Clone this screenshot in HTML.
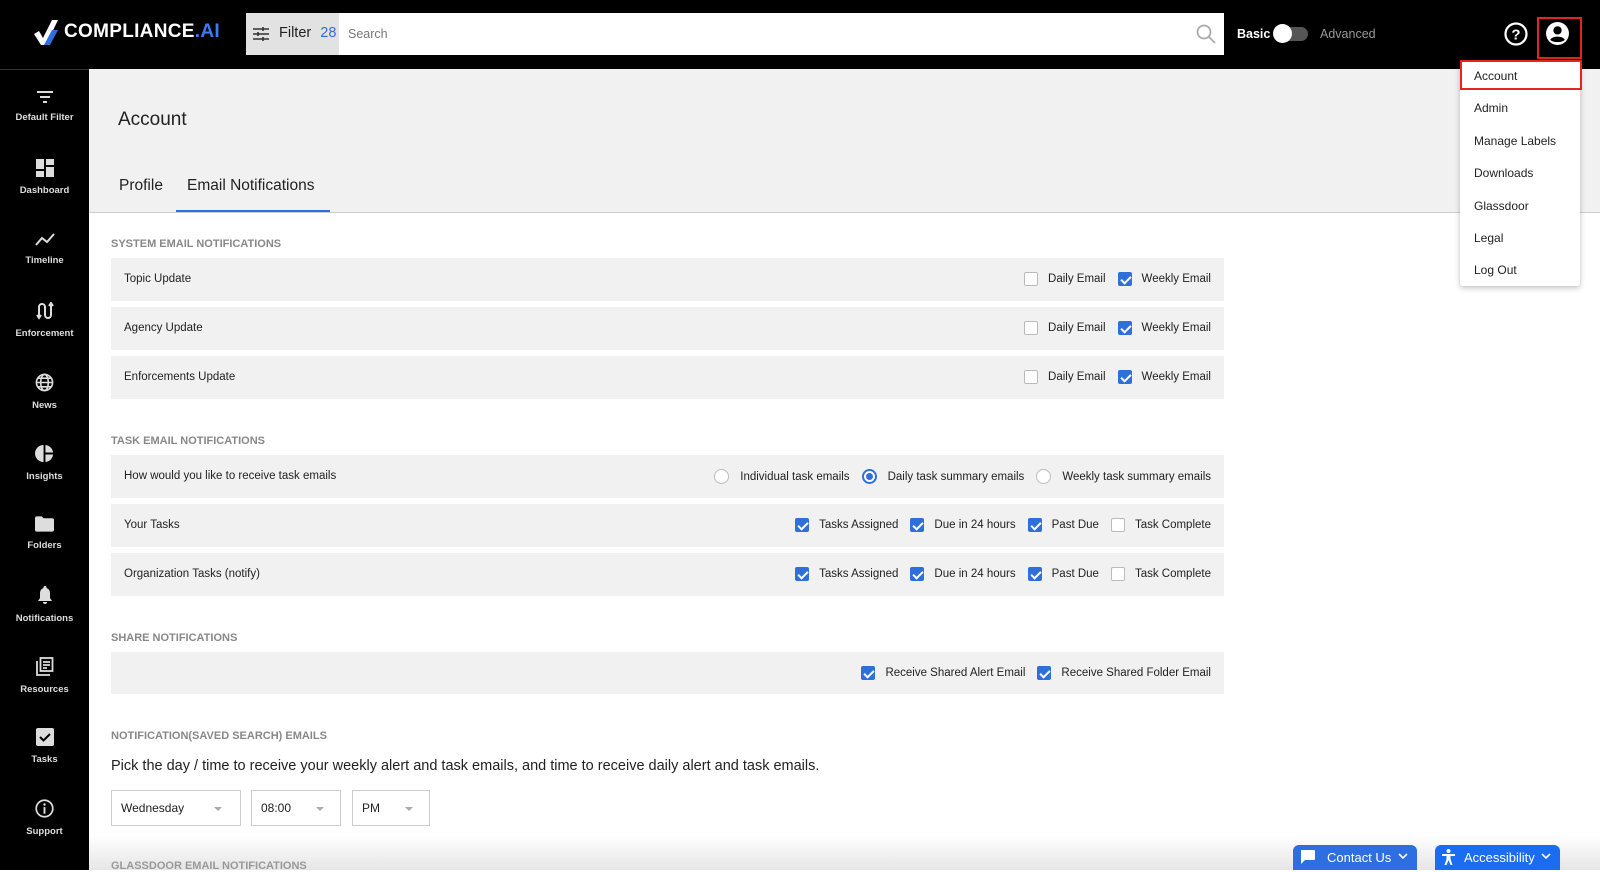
<!DOCTYPE html>
<html><head><meta charset="utf-8"><style>
*{box-sizing:border-box;margin:0;padding:0}
body{width:1600px;height:870px;overflow:hidden;font-family:"Liberation Sans",sans-serif;background:#fff;position:relative;color:#222}
.abs{position:absolute}
.nav{left:0;top:0;width:1600px;height:69px;background:#000}
.side{left:0;top:69px;width:89px;height:801px;background:#000;border-top:1px solid #333}
.si{position:absolute;left:0;width:89px;text-align:center;color:#ddd;font-size:9.5px;font-weight:bold}
.si svg{display:block;margin:0 auto 8px}
.hdr{left:89px;top:69px;width:1511px;height:144px;background:#f1f1f1;border-bottom:1px solid #ccc}
.h{position:absolute;left:111px;font-size:11px;color:#888;font-weight:bold}
.row{position:absolute;left:111px;width:1113px;height:43px;background:#f1f1f1;font-size:11.5px;color:#222}
.row .l{position:absolute;left:13px;top:15px}
.opts{position:absolute;right:13px;top:14px;display:flex;align-items:center;gap:0}
.cb{width:14px;height:14px;border:1px solid #bbb;background:#fff;border-radius:2px;margin-right:10px;margin-left:12px;display:inline-block;position:relative}
.cb.on{background:#2f6fdc;border-color:#2f6fdc}
.cb.on:after{content:"";position:absolute;left:4px;top:1px;width:4px;height:8px;border:solid #fff;border-width:0 2px 2px 0;transform:rotate(45deg)}
.rd{width:15px;height:15px;border:1px solid #bbb;border-radius:50%;background:#fff;display:inline-block;margin-right:11px;margin-left:12px;position:relative}
.rd.on{border-color:#2f6fdc;border-width:2px}
.rd.on:after{content:"";position:absolute;left:2px;top:2px;width:7px;height:7px;border-radius:50%;background:#2f6fdc}
.sel{position:absolute;top:790px;height:36px;border:1px solid #ccc;font-size:12px;padding:10px 9px}
.sel i{position:absolute;top:16px;border:4px solid transparent;border-top-color:#aaa}
.dd{left:1460px;top:60px;width:120px;height:226px;background:#fff;box-shadow:0 2px 6px rgba(0,0,0,.25);border-radius:3px}
.dd div{position:absolute;left:14px;font-size:12px;color:#222}
.btn{position:absolute;top:845px;height:25px;background:#2d6fe0;color:#fff;font-size:13px;border-radius:6px 6px 0 0;padding:5px 0 0 34px}
</style></head><body>
<div class="abs nav"></div>
<svg class="abs" style="left:32px;top:20px" width="30" height="26" viewBox="0 0 30 26"><path d="M2 14l5-3 4 7 9-18h6L14 25H9z" fill="#fff"/><path d="M20 10h6l-8 15h-6z" fill="#2f6fdc"/></svg>
<div class="abs" style="left:64px;top:21px;color:#fff;font-size:19px;font-weight:bold;letter-spacing:.3px">COMPLIANCE<span style="color:#3d7cf0">.AI</span></div>
<div class="abs" style="left:246px;top:13px;width:978px;height:42px;background:#fff"></div>
<div class="abs" style="left:246px;top:13px;width:93px;height:42px;background:#e2e2e2"></div>
<svg class="abs" style="left:253px;top:27px" width="16" height="14" viewBox="0 0 16 14" stroke="#333" stroke-width="1.6"><path d="M0 2h16M0 7h16M0 12h16"/><path d="M10 0v4M5 5v4M10 10v4"/></svg>
<div class="abs" style="left:279px;top:25px;font-size:14.5px;color:#222">Filter <span style="color:#2f6fdc;margin-left:5px">28</span></div>
<div class="abs" style="left:348px;top:27px;font-size:12.5px;color:#777">Search</div>
<svg class="abs" style="left:1196px;top:24px" width="20" height="20" viewBox="0 0 20 20" stroke="#aaa" stroke-width="1.8" fill="none"><circle cx="8" cy="8" r="6.5"/><path d="M13 13l6 6"/></svg>
<div class="abs" style="left:1237px;top:27px;font-size:12.5px;color:#fff;font-weight:bold">Basic</div>
<div class="abs" style="left:1275px;top:27px;width:33px;height:14px;border-radius:7px;background:#555"></div>
<div class="abs" style="left:1273px;top:24px;width:19px;height:19px;border-radius:50%;background:#fff"></div>
<div class="abs" style="left:1320px;top:27px;font-size:12.5px;color:#999">Advanced</div>
<svg class="abs" style="left:1504px;top:22px" width="24" height="24" viewBox="0 0 24 24"><circle cx="12" cy="12" r="10.5" fill="none" stroke="#fff" stroke-width="2.2"/><text x="12" y="17.5" font-size="15" font-weight="bold" text-anchor="middle" fill="#fff" font-family="Liberation Sans">?</text></svg>
<div class="abs" style="left:1537px;top:17px;width:45px;height:42px;border:2px solid #e3261c"></div>
<svg class="abs" style="left:1545px;top:21px" width="25" height="25" viewBox="0 0 24 24"><circle cx="12" cy="12" r="11" fill="#fff"/><circle cx="12" cy="9" r="4" fill="#000"/><path d="M5 18c2-4 12-4 14 0c-2 3-12 3-14 0z" fill="#000"/></svg>

<div class="abs side"></div>
<div class="si" style="top:90px"><svg width="18" height="14" viewBox="0 0 18 14" stroke="#ddd" stroke-width="2"><path d="M1 2h16M4 7h10M7 12h4"/></svg>Default Filter</div>
<div class="si" style="top:159px"><svg width="18" height="18" viewBox="0 0 18 18" fill="#ddd"><rect x="0" y="0" width="8" height="10"/><rect x="10" y="0" width="8" height="6"/><rect x="0" y="12" width="8" height="6"/><rect x="10" y="8" width="8" height="10"/></svg>Dashboard</div>
<div class="si" style="top:233px"><svg width="20" height="14" viewBox="0 0 20 14" stroke="#ddd" stroke-width="2" fill="none"><path d="M1 12l6-7 5 4 7-8"/></svg>Timeline</div>
<div class="si" style="top:302px"><svg width="18" height="18" viewBox="0 0 18 18" stroke="#ddd" stroke-width="2" fill="none"><path d="M3 16V5a3 3 0 016 0v8a3 3 0 006 0V2M1 13l2 3 2-3M13 4l2-3 2 3"/></svg>Enforcement</div>
<div class="si" style="top:373px"><svg width="19" height="19" viewBox="0 0 20 20" stroke="#ddd" stroke-width="1.7" fill="none"><circle cx="10" cy="10" r="8.5"/><ellipse cx="10" cy="10" rx="4" ry="8.5"/><path d="M1.5 10h17M3 5.5h14M3 14.5h14"/></svg>News</div>
<div class="si" style="top:444px"><svg width="19" height="19" viewBox="0 0 20 20" fill="#ddd"><path d="M9 1a9 9 0 000 18z"/><path d="M11 1a9 9 0 018 8h-8z"/><path d="M11 11h8a9 9 0 01-8 8z"/></svg>Insights</div>
<div class="si" style="top:516px"><svg width="19" height="16" viewBox="0 0 20 16" fill="#ddd"><path d="M0 2a2 2 0 012-2h5l2 2h9a2 2 0 012 2v10a2 2 0 01-2 2H2a2 2 0 01-2-2z"/></svg>Folders</div>
<div class="si" style="top:586px"><svg width="16" height="19" viewBox="0 0 16 19" fill="#ddd"><path d="M8 0a1.5 1.5 0 011.5 2A5 5 0 0113 7v5l2 3H1l2-3V7a5 5 0 013.5-5A1.5 1.5 0 018 0zM6 16h4a2 2 0 01-4 0z"/></svg>Notifications</div>
<div class="si" style="top:657px"><svg width="18" height="19" viewBox="0 0 18 19" fill="none" stroke="#ddd" stroke-width="1.8"><path d="M1 4v14h13"/><rect x="4.5" y="1" width="12" height="13"/><path d="M7 5h7M7 8h7M7 11h4"/></svg>Resources</div>
<div class="si" style="top:728px"><svg width="18" height="18" viewBox="0 0 18 18"><rect width="18" height="18" rx="2" fill="#ddd"/><path d="M4 9l3.5 3.5L14 6" stroke="#000" stroke-width="2" fill="none"/></svg>Tasks</div>
<div class="si" style="top:799px"><svg width="19" height="19" viewBox="0 0 20 20"><circle cx="10" cy="10" r="8.7" fill="none" stroke="#ddd" stroke-width="1.8"/><rect x="9" y="8.5" width="2" height="7" fill="#ddd"/><circle cx="10" cy="5.8" r="1.3" fill="#ddd"/></svg>Support</div>

<div class="abs hdr"></div>
<div class="abs" style="left:118px;top:109px;font-size:19px;color:#222">Account</div>
<div class="abs" style="left:119px;top:177px;font-size:15.5px;color:#222">Profile</div>
<div class="abs" style="left:187px;top:177px;font-size:15.5px;color:#222">Email Notifications</div>
<div class="abs" style="left:176px;top:210px;width:154px;height:2px;background:#2f6fdc"></div>

<div class="h" style="top:238px">SYSTEM EMAIL NOTIFICATIONS</div>
<div class="row" style="top:258px"><span class="l">Topic Update</span><div class="opts"><span class="cb"></span>Daily Email<span class="cb on"></span>Weekly Email</div></div>
<div class="row" style="top:307px"><span class="l">Agency Update</span><div class="opts"><span class="cb"></span>Daily Email<span class="cb on"></span>Weekly Email</div></div>
<div class="row" style="top:356px"><span class="l">Enforcements Update</span><div class="opts"><span class="cb"></span>Daily Email<span class="cb on"></span>Weekly Email</div></div>

<div class="h" style="top:435px">TASK EMAIL NOTIFICATIONS</div>
<div class="row" style="top:455px"><span class="l">How would you like to receive task emails</span><div class="opts"><span class="rd"></span>Individual task emails<span class="rd on"></span>Daily task summary emails<span class="rd"></span>Weekly task summary emails</div></div>
<div class="row" style="top:504px"><span class="l">Your Tasks</span><div class="opts"><span class="cb on"></span>Tasks Assigned<span class="cb on"></span>Due in 24 hours<span class="cb on"></span>Past Due<span class="cb"></span>Task Complete</div></div>
<div class="row" style="top:553px"><span class="l">Organization Tasks (notify)</span><div class="opts"><span class="cb on"></span>Tasks Assigned<span class="cb on"></span>Due in 24 hours<span class="cb on"></span>Past Due<span class="cb"></span>Task Complete</div></div>

<div class="h" style="top:632px">SHARE NOTIFICATIONS</div>
<div class="row" style="top:652px;height:42px"><div class="opts"><span class="cb on"></span>Receive Shared Alert Email<span class="cb on"></span>Receive Shared Folder Email</div></div>

<div class="h" style="top:730px">NOTIFICATION(SAVED SEARCH) EMAILS</div>
<div class="abs" style="left:111px;top:758px;font-size:14.5px;color:#222">Pick the day / time to receive your weekly alert and task emails, and time to receive daily alert and task emails.</div>
<div class="sel" style="left:111px;width:130px">Wednesday<i style="left:102px"></i></div>
<div class="sel" style="left:251px;width:90px">08:00<i style="left:64px"></i></div>
<div class="sel" style="left:352px;width:78px">PM<i style="left:52px"></i></div>
<div class="abs" style="left:89px;top:835px;width:1511px;height:35px;background:linear-gradient(#fff,#e6e6e6)"></div>
<div class="h" style="top:860px;color:#999">GLASSDOOR EMAIL NOTIFICATIONS</div>

<div class="btn" style="left:1293px;width:124px">Contact Us</div>
<svg class="abs" style="left:1300px;top:850px" width="15" height="14" viewBox="0 0 15 14"><path d="M1 0h13a1 1 0 011 1v8a1 1 0 01-1 1H5l-4 4z" fill="#fff"/></svg>
<svg class="abs" style="left:1398px;top:853px" width="10" height="7" viewBox="0 0 10 7"><path d="M1 1l4 4 4-4" stroke="#fff" stroke-width="1.6" fill="none"/></svg>
<div class="btn" style="left:1435px;width:125px;background:#1a6df0;padding-left:29px">Accessibility</div>
<svg class="abs" style="left:1442px;top:849px" width="13" height="16" viewBox="0 0 13 16" fill="#fff"><circle cx="6.5" cy="2" r="2"/><path d="M0 5h13v2H8.5v3l2 6H8.5l-2-5-2 5H2.5l2-6V7H0z"/></svg>
<svg class="abs" style="left:1541px;top:853px" width="10" height="7" viewBox="0 0 10 7"><path d="M1 1l4 4 4-4" stroke="#fff" stroke-width="1.6" fill="none"/></svg>

<div class="abs dd">
<div style="top:9px">Account</div><div style="top:41px">Admin</div><div style="top:74px">Manage Labels</div><div style="top:106px">Downloads</div><div style="top:139px">Glassdoor</div><div style="top:171px">Legal</div><div style="top:203px">Log Out</div>
</div>
<div class="abs" style="left:1460px;top:60px;width:122px;height:30px;border:2px solid #e3261c"></div>
</body></html>
